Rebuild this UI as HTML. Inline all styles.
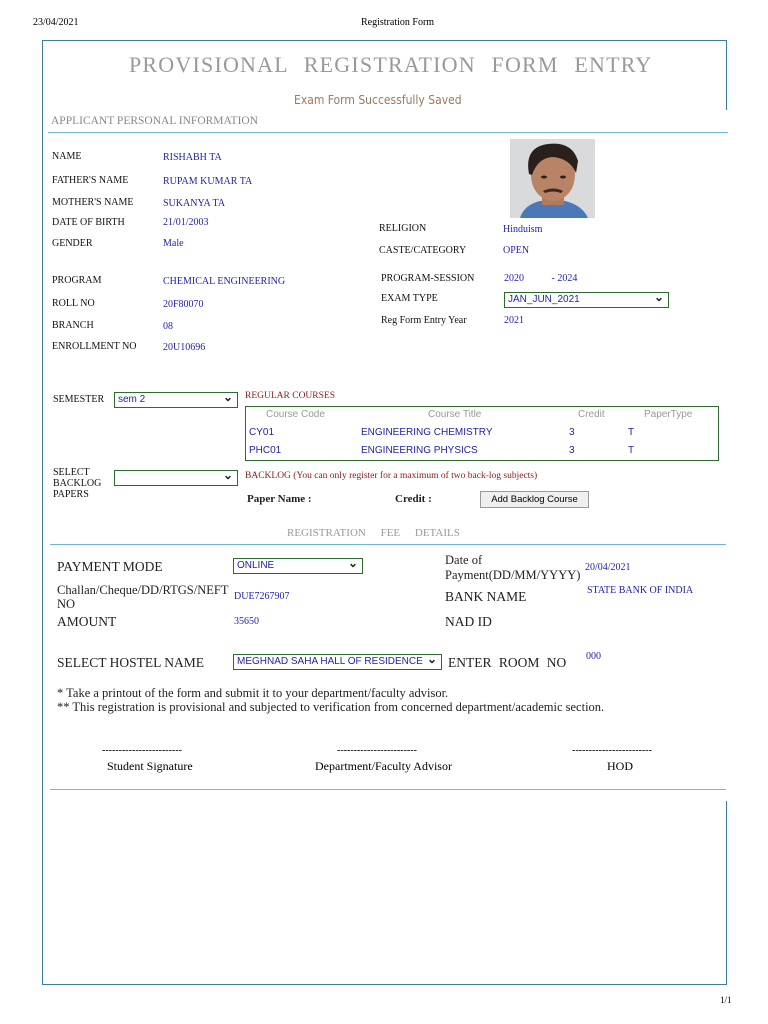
<!DOCTYPE html>
<html><head><meta charset="utf-8"><style>
body{margin:0;width:768px;height:1024px;background:#fff;position:relative;font-family:"Liberation Serif",serif;overflow:hidden}
div,span{position:absolute;white-space:nowrap}
.l{font-size:10px;color:#111}
.v{font-size:10px;color:#2222aa}
.s{font-size:13.5px;color:#222}
.sel{border:1px solid #2e6b2e;font-family:"Liberation Sans",sans-serif;font-size:10px;color:#2222aa;padding-left:3px;box-sizing:border-box;height:16px;line-height:14px;background:#fff;overflow:hidden}
.sel:after{content:"⌄";position:absolute;right:4px;top:-3px;font-size:12px;color:#222;font-weight:bold;background:#fff}
.m{font-family:"Liberation Sans",sans-serif;font-size:10px;color:#2222aa}
</style></head><body>
<div style="left:33px;top:17px;font-size:10px">23/04/2021</div>
<div style="left:361px;top:17px;font-size:10px">Registration Form</div>
<div style="left:720px;top:995px;font-size:9px">1/1</div>
<div style="left:42px;top:40px;width:685px;height:1px;background:#3b7ea1"></div>
<div style="left:42px;top:40px;width:1px;height:945px;background:#3b7ea1"></div>
<div style="left:42px;top:984px;width:685px;height:1px;background:#3b7ea1"></div>
<div style="left:726px;top:40px;width:1px;height:70px;background:#3b7ea1"></div>
<div style="left:726px;top:801px;width:1px;height:184px;background:#3b7ea1"></div>
<div style="left:48px;top:132px;width:680px;height:1px;background:#6bb7d0"></div>
<div style="left:50px;top:544px;width:676px;height:1px;background:#6bb7d0"></div>
<div style="left:50px;top:789px;width:676px;height:1px;background:#aaa"></div>

<div style="left:129px;top:52px;font-size:22px;color:#999;letter-spacing:1.2px;word-spacing:9px">PROVISIONAL REGISTRATION FORM ENTRY</div>
<div style="left:294px;top:93px;font-size:12px;color:#9a7a60;font-family:'DejaVu Sans Condensed','Liberation Sans',sans-serif">Exam Form Successfully Saved</div>
<div style="left:51px;top:115px;font-size:11.5px;color:#888">APPLICANT PERSONAL INFORMATION</div>

<div class="l" style="left:52px;top:151px">NAME</div><div class="v" style="left:163px;top:152px">RISHABH TA</div>
<div class="l" style="left:52px;top:175px">FATHER'S NAME</div><div class="v" style="left:163px;top:176px">RUPAM KUMAR TA</div>
<div class="l" style="left:52px;top:197px">MOTHER'S NAME</div><div class="v" style="left:163px;top:198px">SUKANYA TA</div>
<div class="l" style="left:52px;top:217px">DATE OF BIRTH</div><div class="v" style="left:163px;top:217px">21/01/2003</div>
<div class="l" style="left:52px;top:238px">GENDER</div><div class="v" style="left:163px;top:238px">Male</div>
<div class="l" style="left:52px;top:275px">PROGRAM</div><div class="v" style="left:163px;top:276px">CHEMICAL ENGINEERING</div>
<div class="l" style="left:52px;top:298px">ROLL NO</div><div class="v" style="left:163px;top:299px">20F80070</div>
<div class="l" style="left:52px;top:320px">BRANCH</div><div class="v" style="left:163px;top:321px">08</div>
<div class="l" style="left:52px;top:341px">ENROLLMENT NO</div><div class="v" style="left:163px;top:342px">20U10696</div>

<div class="l" style="left:379px;top:223px">RELIGION</div><div class="v" style="left:503px;top:224px">Hinduism</div>
<div class="l" style="left:379px;top:245px">CASTE/CATEGORY</div><div class="v" style="left:503px;top:245px">OPEN</div>
<div class="l" style="left:381px;top:273px">PROGRAM-SESSION</div><div class="v" style="left:504px;top:273px">2020 &nbsp;&nbsp;&nbsp;&nbsp;&nbsp;&nbsp;&nbsp;&nbsp;&nbsp;&nbsp;- 2024</div>
<div class="l" style="left:381px;top:293px">EXAM TYPE</div>
<div class="sel" style="left:504px;top:292px;width:165px">JAN_JUN_2021</div>
<div class="l" style="left:381px;top:315px">Reg Form Entry Year</div><div class="v" style="left:504px;top:315px">2021</div>

<svg style="position:absolute;left:510px;top:139px" width="85" height="79" viewBox="0 0 85 79">
<rect x="0" y="0" width="85" height="79" fill="#d8dadc"/>
<path d="M10 79 Q14 66 30 62 L55 62 Q72 66 78 79Z" fill="#4a78b8"/>
<rect x="32" y="52" width="22" height="14" fill="#b07a5c"/>
<ellipse cx="43" cy="36" rx="22" ry="26" fill="#b98466"/>
<path d="M19 35 Q14 8 38 5 Q62 2 68 22 L66 34 Q60 20 44 18 Q28 18 22 36Z" fill="#2a1f1a"/>
<path d="M33 52 Q43 47 53 52 L51 54 Q43 51 35 54Z" fill="#3a2a20"/>
<ellipse cx="34" cy="38" rx="3" ry="1.5" fill="#2a1f1a"/><ellipse cx="53" cy="38" rx="3" ry="1.5" fill="#2a1f1a"/>
</svg>

<div class="l" style="left:53px;top:394px">SEMESTER</div>
<div class="sel" style="left:114px;top:392px;width:124px">sem 2</div>
<div style="left:245px;top:391px;font-size:9.5px;color:#8b1a1a">REGULAR COURSES</div>
<div style="left:245px;top:406px;width:474px;height:55px;border:1px solid #2e6b2e;box-sizing:border-box"></div>
<div style="left:266px;top:409px;font-family:'Liberation Sans',sans-serif;font-size:10px;color:#999">Course Code</div>
<div style="left:428px;top:409px;font-family:'Liberation Sans',sans-serif;font-size:10px;color:#999">Course Title</div>
<div style="left:578px;top:409px;font-family:'Liberation Sans',sans-serif;font-size:10px;color:#999">Credit</div>
<div style="left:644px;top:409px;font-family:'Liberation Sans',sans-serif;font-size:10px;color:#999">PaperType</div>
<div class="m" style="left:249px;top:427px">CY01</div><div class="m" style="left:361px;top:427px">ENGINEERING CHEMISTRY</div><div class="m" style="left:569px;top:427px">3</div><div class="m" style="left:628px;top:427px">T</div>
<div class="m" style="left:249px;top:445px">PHC01</div><div class="m" style="left:361px;top:445px">ENGINEERING PHYSICS</div><div class="m" style="left:569px;top:445px">3</div><div class="m" style="left:628px;top:445px">T</div>

<div class="l" style="left:53px;top:467px;line-height:11px;white-space:normal;width:60px">SELECT BACKLOG PAPERS</div>
<div class="sel" style="left:114px;top:470px;width:124px"></div>
<div style="left:245px;top:471px;font-size:9.5px;color:#8b1a1a">BACKLOG (You can only register for a maximum of two back-log subjects)</div>
<div style="left:247px;top:493px;font-size:11px;font-weight:bold;color:#222">Paper Name :</div>
<div style="left:395px;top:493px;font-size:11px;font-weight:bold;color:#222">Credit :</div>
<div style="left:480px;top:491px;width:109px;height:17px;border:1px solid #999;background:#efefef;box-sizing:border-box;font-family:'Liberation Sans',sans-serif;font-size:9.5px;text-align:center;line-height:15px">Add Backlog Course</div>

<div style="left:287px;top:527px;font-size:11px;color:#999;word-spacing:12px">REGISTRATION FEE DETAILS</div>

<div class="s" style="left:57px;top:559px">PAYMENT MODE</div>
<div class="sel" style="left:233px;top:558px;width:130px">ONLINE</div>
<div class="s" style="left:445px;top:553px;line-height:15px;font-size:12.5px">Date of<br>Payment(DD/MM/YYYY)</div>
<div class="v" style="left:585px;top:562px">20/04/2021</div>
<div class="s" style="left:57px;top:583px;line-height:14px;font-size:12.5px">Challan/Cheque/DD/RTGS/NEFT<br>NO</div>
<div class="v" style="left:234px;top:591px">DUE7267907</div>
<div class="s" style="left:445px;top:589px">BANK NAME</div>
<div class="v" style="left:587px;top:585px">STATE BANK OF INDIA</div>
<div class="s" style="left:57px;top:614px">AMOUNT</div>
<div class="v" style="left:234px;top:616px">35650</div>
<div class="s" style="left:445px;top:614px">NAD ID</div>
<div class="s" style="left:57px;top:655px">SELECT HOSTEL NAME</div>
<div class="sel" style="left:233px;top:654px;width:209px">MEGHNAD SAHA HALL OF RESIDENCE</div>
<div class="s" style="left:448px;top:655px;word-spacing:4px">ENTER ROOM NO</div>
<div class="v" style="left:586px;top:651px">000</div>

<div style="left:57px;top:686px;font-size:12.5px;color:#222">* Take a printout of the form and submit it to your department/faculty advisor.</div>
<div style="left:57px;top:700px;font-size:12.5px;color:#222">** This registration is provisional and subjected to verification from concerned department/academic section.</div>

<div style="left:102px;top:745px;font-size:10px">------------------------</div>
<div style="left:107px;top:759px;font-size:12px">Student Signature</div>
<div style="left:337px;top:745px;font-size:10px">------------------------</div>
<div style="left:315px;top:759px;font-size:12px">Department/Faculty Advisor</div>
<div style="left:572px;top:745px;font-size:10px">------------------------</div>
<div style="left:607px;top:759px;font-size:12px">HOD</div>
</body></html>
